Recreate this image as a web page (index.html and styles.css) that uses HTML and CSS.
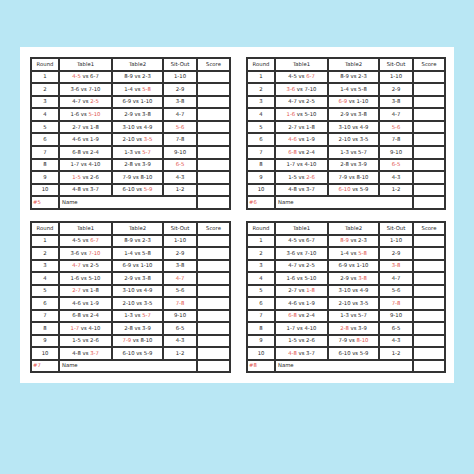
FILE: index.html
```html
<!DOCTYPE html>
<html>
<head>
<meta charset="utf-8">
<link rel="stylesheet" href="styles.css">
</head>
<body>
<div class="page">
  <table class="sheet">
    <colgroup><col class="c1"><col class="c2"><col class="c3"><col class="c4"><col class="c5"></colgroup>
    <tr><th>Round</th><th>Table1</th><th>Table2</th><th>Sit-Out</th><th>Score</th></tr>
    <tr><td>1</td><td><span class="r">4-5</span> vs 6-7</td><td>8-9 vs 2-3</td><td>1-10</td><td></td></tr>
    <tr><td>2</td><td>3-6 vs 7-10</td><td>1-4 vs <span class="r">5-8</span></td><td>2-9</td><td></td></tr>
    <tr><td>3</td><td>4-7 vs <span class="r">2-5</span></td><td>6-9 vs 1-10</td><td>3-8</td><td></td></tr>
    <tr><td>4</td><td>1-6 vs <span class="r">5-10</span></td><td>2-9 vs 3-8</td><td>4-7</td><td></td></tr>
    <tr><td>5</td><td>2-7 vs 1-8</td><td>3-10 vs 4-9</td><td><span class="r">5-6</span></td><td></td></tr>
    <tr><td>6</td><td>4-6 vs 1-9</td><td>2-10 vs <span class="r">3-5</span></td><td>7-8</td><td></td></tr>
    <tr><td>7</td><td>6-8 vs 2-4</td><td>1-3 vs <span class="r">5-7</span></td><td>9-10</td><td></td></tr>
    <tr><td>8</td><td>1-7 vs 4-10</td><td>2-8 vs 3-9</td><td><span class="r">6-5</span></td><td></td></tr>
    <tr><td>9</td><td><span class="r">1-5</span> vs 2-6</td><td>7-9 vs 8-10</td><td>4-3</td><td></td></tr>
    <tr><td>10</td><td>4-8 vs 3-7</td><td>6-10 vs <span class="r">5-9</span></td><td>1-2</td><td></td></tr>
    <tr class="namerow"><td class="num">#5</td><td colspan="3" class="name">Name</td><td></td></tr>
  </table>

  <table class="sheet">
    <colgroup><col class="c1"><col class="c2"><col class="c3"><col class="c4"><col class="c5"></colgroup>
    <tr><th>Round</th><th>Table1</th><th>Table2</th><th>Sit-Out</th><th>Score</th></tr>
    <tr><td>1</td><td>4-5 vs <span class="r">6-7</span></td><td>8-9 vs 2-3</td><td>1-10</td><td></td></tr>
    <tr><td>2</td><td><span class="r">3-6</span> vs 7-10</td><td>1-4 vs 5-8</td><td>2-9</td><td></td></tr>
    <tr><td>3</td><td>4-7 vs 2-5</td><td><span class="r">6-9</span> vs 1-10</td><td>3-8</td><td></td></tr>
    <tr><td>4</td><td><span class="r">1-6</span> vs 5-10</td><td>2-9 vs 3-8</td><td>4-7</td><td></td></tr>
    <tr><td>5</td><td>2-7 vs 1-8</td><td>3-10 vs 4-9</td><td><span class="r">5-6</span></td><td></td></tr>
    <tr><td>6</td><td><span class="r">4-6</span> vs 1-9</td><td>2-10 vs 3-5</td><td>7-8</td><td></td></tr>
    <tr><td>7</td><td><span class="r">6-8</span> vs 2-4</td><td>1-3 vs 5-7</td><td>9-10</td><td></td></tr>
    <tr><td>8</td><td>1-7 vs 4-10</td><td>2-8 vs 3-9</td><td><span class="r">6-5</span></td><td></td></tr>
    <tr><td>9</td><td>1-5 vs <span class="r">2-6</span></td><td>7-9 vs 8-10</td><td>4-3</td><td></td></tr>
    <tr><td>10</td><td>4-8 vs 3-7</td><td><span class="r">6-10</span> vs 5-9</td><td>1-2</td><td></td></tr>
    <tr class="namerow"><td class="num">#6</td><td colspan="3" class="name">Name</td><td></td></tr>
  </table>

  <table class="sheet">
    <colgroup><col class="c1"><col class="c2"><col class="c3"><col class="c4"><col class="c5"></colgroup>
    <tr><th>Round</th><th>Table1</th><th>Table2</th><th>Sit-Out</th><th>Score</th></tr>
    <tr><td>1</td><td>4-5 vs <span class="r">6-7</span></td><td>8-9 vs 2-3</td><td>1-10</td><td></td></tr>
    <tr><td>2</td><td>3-6 vs <span class="r">7-10</span></td><td>1-4 vs 5-8</td><td>2-9</td><td></td></tr>
    <tr><td>3</td><td><span class="r">4-7</span> vs 2-5</td><td>6-9 vs 1-10</td><td>3-8</td><td></td></tr>
    <tr><td>4</td><td>1-6 vs 5-10</td><td>2-9 vs 3-8</td><td><span class="r">4-7</span></td><td></td></tr>
    <tr><td>5</td><td><span class="r">2-7</span> vs 1-8</td><td>3-10 vs 4-9</td><td>5-6</td><td></td></tr>
    <tr><td>6</td><td>4-6 vs 1-9</td><td>2-10 vs 3-5</td><td><span class="r">7-8</span></td><td></td></tr>
    <tr><td>7</td><td>6-8 vs 2-4</td><td>1-3 vs <span class="r">5-7</span></td><td>9-10</td><td></td></tr>
    <tr><td>8</td><td><span class="r">1-7</span> vs 4-10</td><td>2-8 vs 3-9</td><td>6-5</td><td></td></tr>
    <tr><td>9</td><td>1-5 vs 2-6</td><td><span class="r">7-9</span> vs 8-10</td><td>4-3</td><td></td></tr>
    <tr><td>10</td><td>4-8 vs <span class="r">3-7</span></td><td>6-10 vs 5-9</td><td>1-2</td><td></td></tr>
    <tr class="namerow"><td class="num">#7</td><td colspan="3" class="name">Name</td><td></td></tr>
  </table>

  <table class="sheet">
    <colgroup><col class="c1"><col class="c2"><col class="c3"><col class="c4"><col class="c5"></colgroup>
    <tr><th>Round</th><th>Table1</th><th>Table2</th><th>Sit-Out</th><th>Score</th></tr>
    <tr><td>1</td><td>4-5 vs 6-7</td><td><span class="r">8-9</span> vs 2-3</td><td>1-10</td><td></td></tr>
    <tr><td>2</td><td>3-6 vs 7-10</td><td>1-4 vs <span class="r">5-8</span></td><td>2-9</td><td></td></tr>
    <tr><td>3</td><td>4-7 vs 2-5</td><td>6-9 vs 1-10</td><td><span class="r">3-8</span></td><td></td></tr>
    <tr><td>4</td><td>1-6 vs 5-10</td><td>2-9 vs <span class="r">3-8</span></td><td>4-7</td><td></td></tr>
    <tr><td>5</td><td>2-7 vs <span class="r">1-8</span></td><td>3-10 vs 4-9</td><td>5-6</td><td></td></tr>
    <tr><td>6</td><td>4-6 vs 1-9</td><td>2-10 vs 3-5</td><td><span class="r">7-8</span></td><td></td></tr>
    <tr><td>7</td><td><span class="r">6-8</span> vs 2-4</td><td>1-3 vs 5-7</td><td>9-10</td><td></td></tr>
    <tr><td>8</td><td>1-7 vs 4-10</td><td><span class="r">2-8</span> vs 3-9</td><td>6-5</td><td></td></tr>
    <tr><td>9</td><td>1-5 vs 2-6</td><td>7-9 vs <span class="r">8-10</span></td><td>4-3</td><td></td></tr>
    <tr><td>10</td><td><span class="r">4-8</span> vs 3-7</td><td>6-10 vs 5-9</td><td>1-2</td><td></td></tr>
    <tr class="namerow"><td class="num">#8</td><td colspan="3" class="name">Name</td><td></td></tr>
  </table>
</div>
</body>
</html>
```

FILE: styles.css
```css
html, body {
  margin: 0;
  padding: 0;
  background: #b9e7f4;
}
body {
  width: 474px;
  height: 474px;
  overflow: hidden;
}
.page {
  margin: 47px 0 0 20px;
  width: 434px;
  height: 336px;
  box-sizing: border-box;
  padding: 10px 8px 10px 10px;
  background: #ffffff;
  display: grid;
  grid-template-columns: 201px 200px;
  grid-template-rows: 153px 152px;
  column-gap: 15px;
  row-gap: 11px;
}
.sheet {
  border-collapse: collapse;
  table-layout: fixed;
  width: 100%;
  height: 100%;
  font-family: "DejaVu Sans", "Liberation Sans", sans-serif;
  font-size: 5.3px;
  color: #1e1e1e;
  border: 2px solid #2e2e2e;
}
.sheet col.c1 { width: 28px; }
.sheet col.c2 { width: 53px; }
.sheet col.c3 { width: 51px; }
.sheet col.c4 { width: 34px; }
.sheet col.c5 { width: auto; }
.sheet th, .sheet td {
  border: 2px solid #333333;
  padding: 0;
  text-align: center;
  vertical-align: middle;
  font-weight: normal;
  line-height: 1;
  white-space: nowrap;
}
.sheet .r { color: #e2524c; }
.sheet td.num {
  text-align: left;
  padding-left: 1px;
  color: #e2524c;
}
.sheet td.name {
  text-align: left;
  padding-left: 2px;
}
```
